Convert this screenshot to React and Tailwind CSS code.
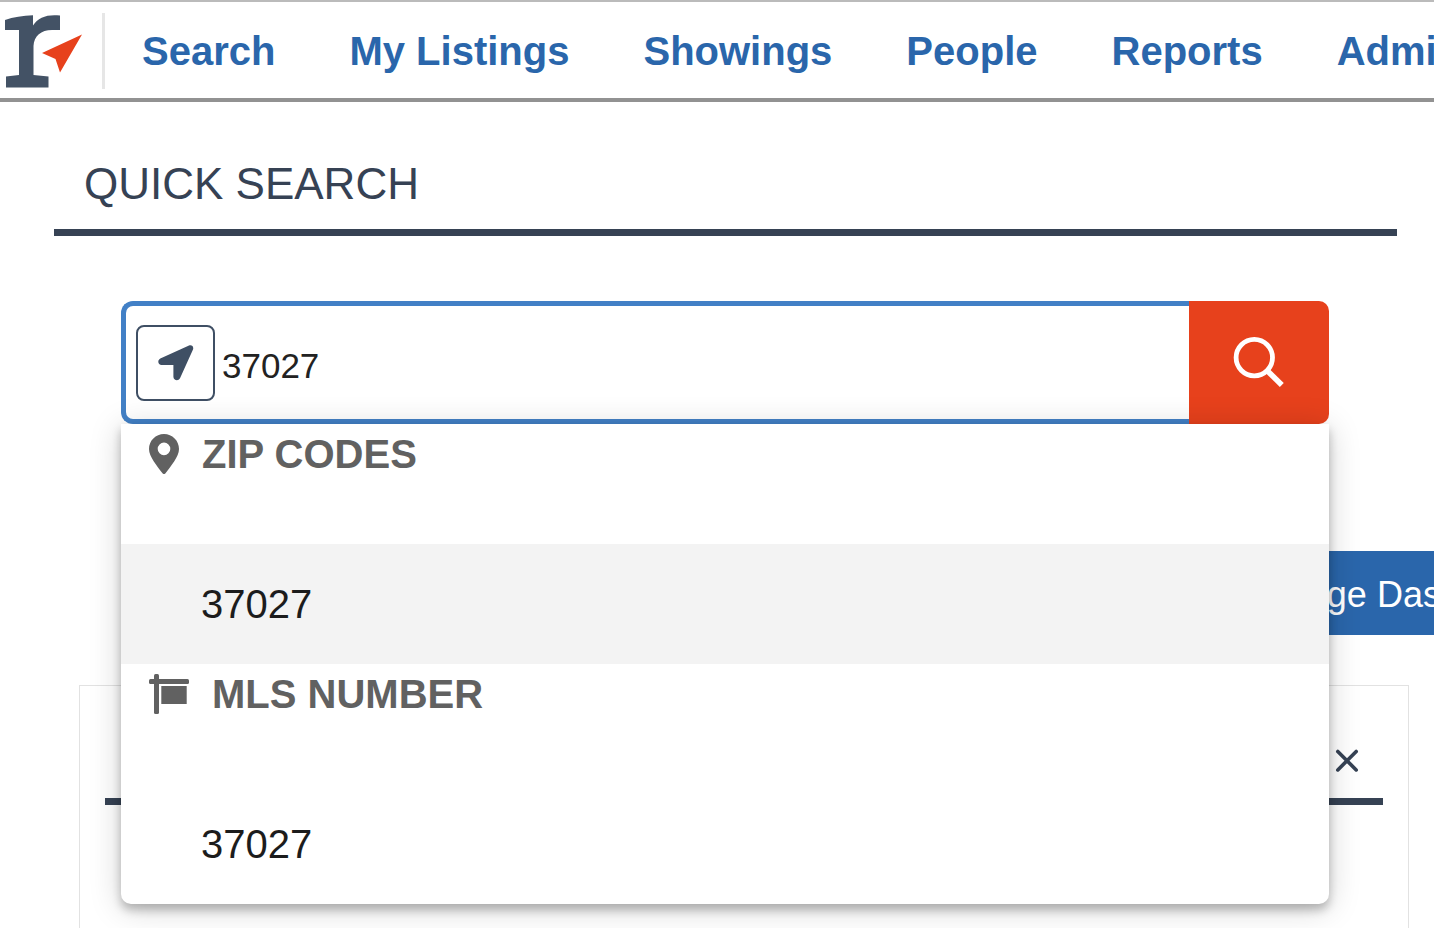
import React, { useState } from "react";

const navLinks = ["Search", "My Listings", "Showings", "People", "Reports", "Admin"];

const App = () => {
  const [query, setQuery] = useState("37027");

  return (
    <div className="flex min-h-screen flex-col overflow-hidden bg-white font-['Liberation_Sans',Arial,sans-serif]">
      <Header />

      <main className="flex grow flex-col pr-[37px] pl-[54px]">
        <h1 className="border-b-[7px] border-[#364254] px-[30px] pt-[52px] pb-[15px] text-[44px] leading-[60px] text-[#364254]">
          QUICK SEARCH
        </h1>

        <div className="relative z-10 mt-[65px] mr-[68px] ml-[67px]">
          <SearchForm query={query} setQuery={setQuery} />
          <Suggestions onSelect={setQuery} />
        </div>

        <div className="-mr-[196px] mt-[127px] flex justify-end">
          <button
            type="button"
            className="bg-[#2a66ab] px-10 pt-5 pb-4 text-[36px] leading-[48px] text-white"
          >
            Manage Dashboard
          </button>
        </div>

        <DashboardCard />
      </main>
    </div>
  );
};

const Header = () => {
  return (
    <header className="flex items-center border-t-2 border-b-4 border-t-[#bbbbbb] border-b-[#929292] pt-[11px] pb-[9px]">
      <a href="#home" aria-label="Home" className="shrink-0">
        <Logo />
      </a>
      <nav className="flex h-[76px] shrink-0 items-center gap-[74px] border-l-[3px] border-[#e6e6e6] pl-[37px]">
        {navLinks.map((link) => (
          <a
            key={link}
            href="#nav"
            className="text-[40px] leading-[48px] font-bold whitespace-nowrap text-[#2a66ab]"
          >
            {link}
          </a>
        ))}
      </nav>
    </header>
  );
};

const SearchForm = ({ query, setQuery }) => {
  return (
    <form className="flex h-[123px]" onSubmit={(e) => e.preventDefault()}>
      <div className="flex grow items-center gap-[7px] rounded-l-xl border-y-[5px] border-l-[5px] border-[#4280c6] pl-[10px]">
        <button
          type="button"
          aria-label="Use my location"
          className="flex h-[76px] w-[79px] shrink-0 items-center justify-center rounded-lg border-2 border-[#3f4f64]"
        >
          <ArrowIcon />
        </button>
        <input
          type="text"
          aria-label="Quick search"
          value={query}
          onChange={(e) => setQuery(e.target.value)}
          className="h-16 min-w-0 grow pt-1.5 text-[35px] text-[#222222] outline-none"
        />
      </div>
      <button
        type="submit"
        aria-label="Search"
        className="flex w-[140px] shrink-0 items-center justify-center rounded-r-[10px] bg-[#e7411c]"
      >
        <SearchIcon />
      </button>
    </form>
  );
};

const Suggestions = ({ onSelect }) => {
  return (
    <div className="absolute top-full right-0 left-0 rounded-b-[10px] bg-white shadow-[0_6px_10px_0_rgba(0,0,0,0.24),0_4px_32px_0_rgba(0,0,0,0.18)]">
      <GroupTitle icon={<PinIcon />} title="ZIP CODES" />
      <button
        type="button"
        onClick={() => onSelect("37027")}
        className="block h-[120px] w-full bg-[#f3f3f3] px-20 text-left text-[40px] text-[#1c1c1c]"
      >
        37027
      </button>
      <GroupTitle icon={<SignIcon />} title="MLS NUMBER" />
      <button
        type="button"
        onClick={() => onSelect("37027")}
        className="block h-[120px] w-full rounded-b-[10px] px-20 text-left text-[40px] text-[#1c1c1c]"
      >
        37027
      </button>
    </div>
  );
};

const GroupTitle = ({ icon, title }) => {
  return (
    <div className="h-[120px] px-7">
      <h2 className="flex items-center gap-[23px] text-[40px] leading-[60px] font-bold text-[#616161]">
        {icon}
        {title}
      </h2>
    </div>
  );
};

const DashboardCard = () => {
  return (
    <section className="-mr-3 ml-[25px] mt-[50px] grow border border-b-0 border-[#e2e2e2] px-[25px]">
      <div className="flex justify-end border-b-[7px] border-[#364254] pt-[62px] pr-[23px] pb-6">
        <button type="button" aria-label="Close" className="text-[#364254]">
          <svg width="26" height="26" viewBox="0 0 26 26" fill="none">
            <path
              d="M3.8 3.5 22.2 21.900M22.2 3.5 3.8 21.900"
              stroke="currentColor"
              strokeWidth="3.6"
              strokeLinecap="round"
            />
          </svg>
        </button>
      </div>
    </section>
  );
};

const Logo = () => {
  return (
    <svg width="102" height="76" viewBox="0 13 102 76">
      <path
        d="M5 20C13 17 23 15.500 33 15.200V25.500C38 17 48 14 60 15.500V30H52C41 30 34 36 33.500 46V75L48.500 76.500V87.500H6V76.500L19 75V30H5Z"
        fill="#435265"
      />
      <path d="M82 34.500 60 72.500 55.500 59 42 53Z" fill="#e7411c" />
    </svg>
  );
};

const ArrowIcon = () => {
  return (
    <svg width="36" height="36" viewBox="0 0 36 36" fill="#3f4f64">
      <path d="M31 0.600C33.800-.400 36 1.800 35 4.500L22 33.200C20.300 36.500 15.400 35.300 15.400 31.700V20.100H3.700C0 20.100-1 15.300 2.300 13.500Z" />
    </svg>
  );
};

const SearchIcon = () => {
  return (
    <svg width="52" height="52" viewBox="0 0 52 52" fill="none" stroke="white">
      <circle cx="21.300" cy="20.600" r="18.200" strokeWidth="4.800" />
      <path d="M34 33.500 48.800 48" strokeWidth="5.600" />
    </svg>
  );
};

const PinIcon = () => {
  return (
    <svg width="30" height="40" viewBox="0 0 30 40" fill="currentColor">
      <path
        fillRule="evenodd"
        d="M15 0C23.300 0 30 6.700 30 15C30 22.500 22 32 16.500 39.200Q15 41 13.500 39.200C8 32 0 22.500 0 15C0 6.700 6.700 0 15 0ZM15 8.600a6.300 6.300 0 1 0 0 12.600a6.300 6.300 0 0 0 0-12.600Z"
      />
    </svg>
  );
};

const SignIcon = () => {
  return (
    <svg width="40" height="40" viewBox="0 0 40 40" fill="currentColor">
      <rect x="5" y="0" width="5" height="40" rx="1.500" />
      <rect x="0" y="5" width="40" height="5" rx="1.500" />
      <rect x="12.300" y="12" width="25.400" height="18" />
    </svg>
  );
};

export default App;
